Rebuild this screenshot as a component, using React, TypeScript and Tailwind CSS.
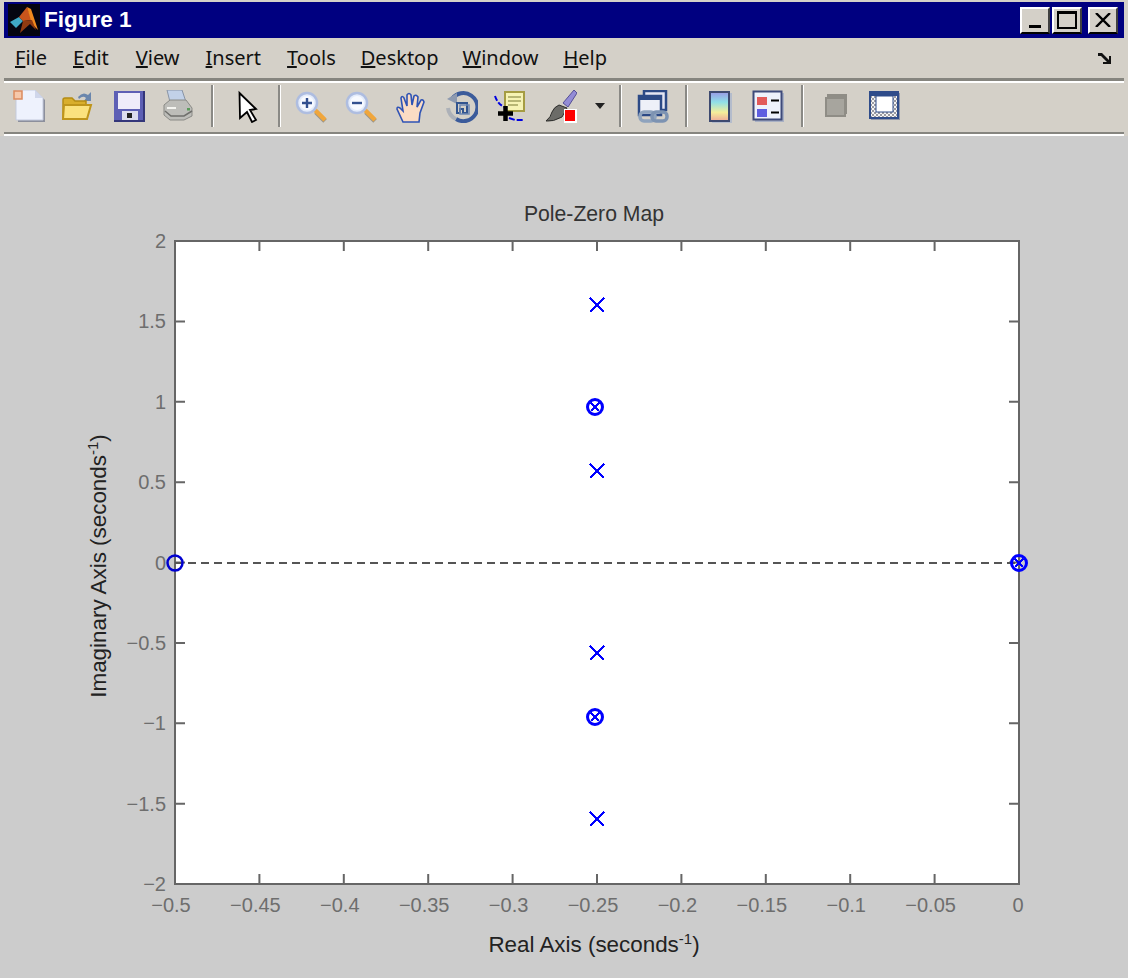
import React from "react";

const Sep = ({ className }: { className: string }) => (
  <div className={`flex h-[42px] w-[3px] shrink-0 ${className}`}>
    <div className="w-[2px] bg-[#8a8985]" />
    <div className="w-[2px] bg-white" />
  </div>
);

const Icon = ({ className, children }: { className: string; children: React.ReactNode }) => (
  <svg viewBox="0 0 32 33" className={`h-[33px] w-[32px] shrink-0 ${className}`}>
    {children}
  </svg>
);

const Lens = ({ minus }: { minus?: boolean }) => (
  <>
    <path d="M21 22 L30 31" stroke="#9a958a" strokeWidth="5" />
    <path d="M20 20 L30 30" stroke="#f0a63c" strokeWidth="4.500" />
    <circle cx="12" cy="13" r="10" fill="#e4ecfb" stroke="#aebde0" strokeWidth="2.500" />
    <circle cx="12" cy="13" r="7" fill="#f8faff" />
    <path d={minus ? "M7 13 H17" : "M7 13 H17 M12 8 V18"} stroke="#33508f" strokeWidth="2.400" />
  </>
);

const Logo = () => (
  <svg viewBox="0 0 32 32" className="h-[32px] w-[32px] shrink-0">
    <rect width="32" height="32" fill="#050510" />
    <path d="M2 18 L11 13 L15 17 L8 24 Z" fill="#3fa9c6" />
    <path d="M11 13 L19 3 L24 16 L15 17 Z" fill="#c9551c" />
    <path d="M19 3 L23 5 L30 26 L24 20 Z" fill="#f08a1e" />
    <path d="M12 29 L15 17 L24 16 L28 26 L22 20 Z" fill="#8f3b12" />
  </svg>
);

const Caption = ({ className, children }: { className: string; children: React.ReactNode }) => (
  <button
    className={`flex h-[27px] w-[30px] items-center justify-center border-2 border-t-white border-l-white border-r-[#404040] border-b-black bg-[#d4d0c8] ${className}`}
  >
    {children}
  </button>
);

const menu: [string, string, string][] = [
  ["F", "ile", "ml-[11px]"],
  ["E", "dit", "ml-[26px]"],
  ["V", "iew", "ml-[27px]"],
  ["I", "nsert", "ml-[26px]"],
  ["T", "ools", "ml-[26px]"],
  ["D", "esktop", "ml-[25px]"],
  ["W", "indow", "ml-[24px]"],
  ["H", "elp", "ml-[25px]"],
];

const xTicks = ["-0.5", "-0.45", "-0.4", "-0.35", "-0.3", "-0.25", "-0.2", "-0.15", "-0.1", "-0.05", "0"];
const yTicks = ["2", "1.5", "1", "0.5", "0", "-0.5", "-1", "-1.5", "-2"];
const L = 175;
const R = 1019;
const T = 106;
const B = 749;
const xAt = (i: number) => L + ((R - L) * i) / 10;
const yAt = (i: number) => T + ((B - T) * i) / 8;
const poles = [170, 336, 518, 684];
const zeros = [272, 582];
const blue = "#0000ff";

const Cross = ({ x, y, s = 7, w = 1.8 }: { x: number; y: number; s?: number; w?: number }) => (
  <path d={`M${x - s} ${y - s} L${x + s} ${y + s} M${x - s} ${y + s} L${x + s} ${y - s}`} stroke={blue} strokeWidth={w} fill="none" shapeRendering="crispEdges" />
);

const Plot = () => (
  <svg viewBox="0 1 1128 842" className="block h-[842px] w-[1128px]" style={{ fontFamily: '"Liberation Sans", Arial, sans-serif' }}>
    <rect x={L} y={T} width={R - L} height={B - T} fill="#fff" />
    {xTicks.map((t, i) => (
      <g key={t}>
        <path d={`M${xAt(i)} ${T} v10 M${xAt(i)} ${B} v-10`} stroke="#666" strokeWidth="2" />
        <text x={xAt(i) - (i === 10 ? 1 : 4)} y={777} textAnchor="middle" fontSize="20" fill="#6e6e6e">{t.replace("-", "\u2212")}</text>
      </g>
    ))}
    {yTicks.map((t, i) => (
      <g key={t}>
        <path d={`M${L} ${yAt(i)} h10 M${R} ${yAt(i)} h-10`} stroke="#666" strokeWidth="2" />
        <text x={166} y={yAt(i) + 7} textAnchor="end" fontSize="20" fill="#6e6e6e">{t.replace("-", "\u2212")}</text>
      </g>
    ))}
    <rect x={L} y={T} width={R - L} height={B - T} fill="none" stroke="#666" strokeWidth="2" />
    <path d={`M${L} 428 H${R}`} stroke="#555" strokeWidth="2" strokeDasharray="8 5" />
    {poles.map((y) => <Cross key={y} x={597} y={y} />)}
    {zeros.map((y) => (
      <g key={y}>
        <circle cx={595} cy={y} r={7.5} fill="none" stroke={blue} strokeWidth="3" />
        <Cross x={595} y={y} s={4} w={1.5} />
      </g>
    ))}
    <circle cx={175} cy={428} r={7.5} fill="none" stroke="#0000d0" strokeWidth="2.5" />
    <circle cx={1019} cy={428} r={7.5} fill="none" stroke={blue} strokeWidth="3" />
    <Cross x={1019} y={428} s={4} w={1.5} />
    <text x={594} y={86} textAnchor="middle" fontSize="21.2" fill="#333">Pole-Zero Map</text>
    <text x={594} y={817} textAnchor="middle" fontSize="22.4" fill="#222">
      Real Axis (seconds<tspan dy="-8" fontSize="15">-1</tspan><tspan dy="8">)</tspan>
    </text>
    <text transform="translate(106 431) rotate(-90)" textAnchor="middle" fontSize="22.4" fill="#222">
      Imaginary Axis (seconds<tspan dy="-8" fontSize="15">-1</tspan><tspan dy="8">)</tspan>
    </text>
  </svg>
);

export default function App() {
  return (
    <div className="flex h-[978px] w-[1128px] flex-col overflow-hidden bg-[#d4d0c8]">
      <div className="mx-[4px] mt-[2px] flex h-[36px] shrink-0 items-center bg-[#000080] pl-[4px] pr-[6px]">
        <Logo />
        <span className="ml-[4px] text-[22.5px] font-bold text-white [font-family:'Liberation_Sans',Arial,sans-serif]">Figure 1</span>
        <Caption className="ml-auto">
          <span className="mt-[12px] h-[3px] w-[12px] self-center bg-black" />
        </Caption>
        <Caption className="ml-[2px]">
          <span className="h-[18px] w-[20px] border-2 border-t-[3px] border-black" />
        </Caption>
        <Caption className="ml-[6px]">
          <svg viewBox="0 0 16 14" className="h-[14px] w-[16px]">
            <path d="M1 0 L15 14 M15 0 L1 14" stroke="#000" strokeWidth="2.400" />
          </svg>
        </Caption>
      </div>

      <div className="mx-[4px] flex h-[40px] shrink-0 items-center text-[20px] text-[#111] [font-family:'Noto_Sans',Tahoma,sans-serif]">
        {menu.map(([a, b, c]) => (
          <span key={a} className={c}>
            <span className="underline">{a}</span>
            {b}
          </span>
        ))}
        <svg viewBox="0 0 16 14" className="ml-auto mr-[11px] h-[14px] w-[16px]">
          <path d="M1 2 H5 L12 9 V5 H14 V13 H6 V11 H10 L4 5 H1 Z" fill="#111" />
        </svg>
      </div>

      <div className="mx-[4px] h-[3px] shrink-0 bg-[#86857f]" />
      <div className="mx-[4px] flex h-[51px] shrink-0 items-center border-t-2 border-white pb-[3px]">
        <Icon className="ml-[9px]">
          <path d="M5 2 H24 L32 10 V32 H5 Z" fill="#8c8f9c" />
          <path d="M3 0 H22 L30 8 V30 H3 Z" fill="#eef2fd" stroke="#c4cbdd" />
          <path d="M22 0 V8 H30 Z" fill="#cfd6ea" />
          <rect x="1" y="1" width="8" height="8" fill="#f6c8aa" stroke="#db8a5e" strokeWidth="1.500" />
        </Icon>
        <Icon className="ml-[16px]">
          <path d="M17 7 Q22 1 27 5 L30 2 V11 H23 L25 8 Q22 5 18 9 Z" fill="#6a86ad" />
          <path d="M2 10 Q2 8 4 8 H11 L14 11 H25 V28 H2 Z" fill="#d9ae2c" stroke="#b48c14" strokeWidth="1.500" />
          <path d="M3 15 H30 L26 29 H2 Z" fill="#fbe27e" stroke="#bf951b" strokeWidth="2" />
        </Icon>
        <Icon className="ml-[20px]">
          <rect x="1" y="1" width="29" height="30" fill="#5d5fb5" />
          <path d="M31 1 V31 H1" fill="none" stroke="#34367a" strokeWidth="2" />
          <rect x="5" y="3" width="22" height="16" fill="#eeecfa" />
          <rect x="9" y="21" width="16" height="9" fill="#dcdcee" />
          <rect x="14" y="23" width="5" height="5" fill="#222" />
        </Icon>
        <Icon className="ml-[17px]">
          <path d="M5 0 H20 L24 12 H8 Z" fill="#c2d1e8" stroke="#8894a6" />
          <path d="M2 15 L8 10 H24 L30 18 V26 L22 30 H8 L2 25 Z" fill="#bdbdb9" stroke="#8a8a86" />
          <path d="M3 21 L9 26 H22 L30 21" fill="none" stroke="#6f6f6c" strokeWidth="1.500" />
          <path d="M5 18 H14" stroke="#f4f4f0" strokeWidth="2" />
          <rect x="25" y="18" width="3" height="2.500" fill="#5a9a5a" />
        </Icon>
        <Sep className="ml-[17px]" />
        <Icon className="ml-[18px]">
          <path d="M7.500 3 L24 19 L18 20 L24 30 L20 32 L15 22 L8 28 Z" fill="#fff" stroke="#000" strokeWidth="1.800" />
        </Icon>
        <Sep className="ml-[14px]" />
        <Icon className="ml-[14px]"><Lens /></Icon>
        <Icon className="ml-[18px]"><Lens minus /></Icon>
        <Icon className="ml-[18px]">
          <path d="M8 32 L2 19 Q2 16 5 18 L8 21 L6 8 Q7 5 9 8 L12 16 L12 5 Q14 2 16 5 L17 15 L19 6 Q21 4 23 7 L22 17 L26 10 Q28 9 29 12 L25 23 L24 32 Z" fill="#fbdcc4" stroke="#2f53b5" strokeWidth="1.600" />
        </Icon>
        <Icon className="ml-[19px]">
          <path d="M6 9 A14 14 0 1 1 10 29" fill="none" stroke="#3b5b9b" strokeWidth="4" />
          <path d="M10 29 A14 14 0 0 1 2 18" fill="none" stroke="#adb1b8" strokeWidth="4" />
          <path d="M1 9 L11 3 L11 14 Z" fill="#8e9ab0" />
          <path d="M11 13 H21 V23 H17 V19 H14 V23 H11 Z" fill="none" stroke="#33558f" strokeWidth="2" />
          <path d="M14 15 H23 V24 H14 Z" fill="none" stroke="#6f88b3" strokeWidth="1.500" />
        </Icon>
        <Icon className="ml-[16px]">
          <rect x="11" y="2" width="19" height="19" fill="#f6f3b4" stroke="#a59c42" strokeWidth="2" />
          <path d="M14 7 H27 M14 11 H27 M14 15 H24" stroke="#a3a25f" strokeWidth="1.500" />
          <path d="M1 6 Q4 15 11 17" fill="none" stroke="#0000e0" strokeWidth="2" strokeDasharray="5 2" />
          <path d="M15 28 L21 30 H30" fill="none" stroke="#0000e0" strokeWidth="2" strokeDasharray="6 2" />
          <path d="M4 23.500 H19 M11.500 16 V31" stroke="#000" strokeWidth="4.500" />
        </Icon>
        <Icon className="ml-[19px]">
          <path d="M18 13 L29 0 L32 3 L23 17 Z" fill="#938cd6" stroke="#554f95" />
          <path d="M14 15 L22 18 L17 27 Q8 32 1 31 Q6 27 7 22 Q9 17 14 15 Z" fill="#6c6c68" stroke="#2e2e2c" />
          <rect x="19" y="19" width="13" height="14" fill="#fff" />
          <rect x="20" y="20" width="10" height="11" fill="#ff0000" />
        </Icon>
        <svg viewBox="0 0 10 6" className="ml-[18px] h-[6px] w-[10px] shrink-0">
          <path d="M0 0 H10 L5 6 Z" fill="#222" />
        </svg>
        <Sep className="ml-[14px]" />
        <Icon className="ml-[15px]">
          <rect x="7" y="1" width="22" height="19" fill="#e4e6f2" stroke="#2c4a86" strokeWidth="2.500" />
          <rect x="2" y="6" width="22" height="19" fill="#eef0f8" stroke="#2c4a86" strokeWidth="2.500" />
          <rect x="2" y="6" width="22" height="4" fill="#2c4a86" />
          <rect x="3" y="22" width="15" height="9" rx="4" fill="none" stroke="#8fa3bd" strokeWidth="3.500" />
          <rect x="15" y="22" width="15" height="9" rx="4" fill="none" stroke="#7d93b2" strokeWidth="3.500" />
        </Icon>
        <Sep className="ml-[16px]" />
        <svg viewBox="0 0 32 33" className="ml-[15px] h-[33px] w-[32px] shrink-0">
          <defs>
            <linearGradient id="cb" x1="0" y1="0" x2="0" y2="1">
              <stop offset="0" stopColor="#9a9ae6" />
              <stop offset="0.35" stopColor="#8fdfe8" />
              <stop offset="0.7" stopColor="#f4ee9a" />
              <stop offset="1" stopColor="#eeaa9a" />
            </linearGradient>
          </defs>
          <rect x="9" y="3" width="20" height="30" fill="#b4bccc" />
          <rect x="7" y="2" width="19" height="29" fill="url(#cb)" stroke="#3e4a70" strokeWidth="2" />
        </svg>
        <Icon className="ml-[17px]">
          <rect x="3" y="3" width="29" height="29" fill="#a8b0c4" />
          <rect x="1.500" y="1.500" width="28" height="28" fill="#eef1fb" stroke="#3e4a7a" strokeWidth="2" />
          <rect x="5" y="7" width="10" height="8" fill="#e25a5a" />
          <rect x="5" y="19" width="10" height="8" fill="#5e5ee0" />
          <path d="M19 10.500 H27 M19 22.500 H27" stroke="#000" strokeWidth="2" />
        </Icon>
        <Sep className="ml-[17px]" />
        <Icon className="ml-[16px]">
          <rect x="7" y="4" width="20" height="20" fill="#8f8d86" />
          <rect x="6" y="8" width="19" height="18" fill="#a7a59e" stroke="#8f8d86" strokeWidth="2" />
        </Icon>
        <Icon className="ml-[16px]">
          <defs>
            <pattern id="chk" width="4" height="4" patternUnits="userSpaceOnUse">
              <rect width="4" height="4" fill="#f4f4f4" />
              <rect width="2" height="2" fill="#9a9aa0" />
              <rect x="2" y="2" width="2" height="2" fill="#9a9aa0" />
            </pattern>
          </defs>
          <rect x="3" y="3" width="29" height="27" fill="#8f95a8" />
          <rect x="2" y="2" width="28" height="26" fill="url(#chk)" stroke="#2f4c8a" strokeWidth="2" />
          <rect x="2" y="2" width="28" height="4" fill="#2f4c8a" />
          <rect x="8" y="6" width="17" height="16" fill="#fff" stroke="#2f4c8a" />
        </Icon>
      </div>
      <div className="mx-[4px] h-[2px] shrink-0 bg-[#86857f]" />
      <div className="mx-[4px] h-[2px] shrink-0 bg-white" />
      <div className="h-[842px] shrink-0 bg-[#cccccc]">
        <Plot />
      </div>
    </div>
  );
}
